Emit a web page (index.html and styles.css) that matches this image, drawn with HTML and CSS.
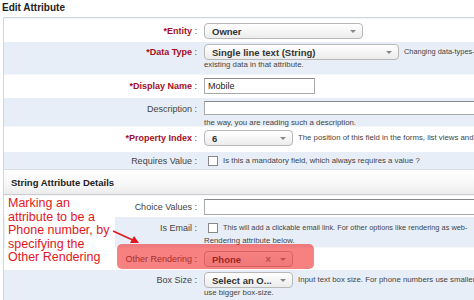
FILE: index.html
```html
<!DOCTYPE html>
<html>
<head>
    <meta charset="utf-8">
    <title>Edit Attribute</title>
    <link rel="stylesheet" href="styles.css">
</head>
<body>
<div class="page">
    <h2 class="title">Edit Attribute</h2>
    <div class="form">
        <div class="row r-entity">
            <div class="label"><span class="req">*Entity</span> :</div>
            <div class="value">
                <span class="select w-entity">Owner<i class="caret"></i></span>
            </div>
        </div>
        <div class="row alt r-type">
            <div class="label"><span class="req">*Data Type</span> :</div>
            <div class="value">
                <span class="select w-type">Single line text (String)<i class="caret"></i></span><span class="help edge">Changing data-types-</span>
                <div class="help line2">existing data in that attribute.</div>
            </div>
        </div>
        <div class="row r-name">
            <div class="label"><span class="req">*Display Name</span> :</div>
            <div class="value">
                <span class="input w-name">Mobile</span>
            </div>
        </div>
        <div class="row alt r-desc">
            <div class="label">Description :</div>
            <div class="value">
                <span class="input w-full"></span>
                <div class="help line2">the way, you are reading such a description.</div>
            </div>
        </div>
        <div class="row r-index">
            <div class="label"><span class="req">*Property Index</span> :</div>
            <div class="value">
                <span class="select w-small">6<i class="caret"></i></span><span class="help">The position of this field in the forms, list views and</span>
            </div>
        </div>
        <div class="row alt r-check">
            <div class="label">Requires Value :</div>
            <div class="value">
                <span class="check"></span><span class="help">Is this a mandatory field, which always requires a value ?</span>
            </div>
        </div>
        <div class="section">String Attribute Details</div>
        <div class="row r-choice">
            <div class="label">Choice Values :</div>
            <div class="value">
                <span class="input w-full"></span>
            </div>
        </div>
        <div class="row alt r-email">
            <div class="label">Is Email :</div>
            <div class="value">
                <span class="check"></span><span class="help edge">This will add a clickable email link. For other options like rendering as web-</span>
                <div class="help line2">Rendering attribute below.</div>
            </div>
        </div>
        <div class="row r-render">
            <div class="label">Other Rendering :</div>
            <div class="value">
                <span class="select w-small phone">Phone<b class="clear">×</b><i class="caret"></i></span>
            </div>
        </div>
        <div class="row alt r-box">
            <div class="label">Box Size :</div>
            <div class="value">
                <span class="select w-small">Select an O...<i class="caret"></i></span><span class="help">Input text box size. For phone numbers use smaller</span>
                <div class="help line2">use bigger box-size.</div>
            </div>
        </div>
    </div>

    <div class="highlight"></div>
    <div class="note">Marking an<br>attribute to be a<br>Phone number, by<br>specifying the<br>Other Rendering</div>
    <svg class="arrow" width="40" height="24" viewBox="0 0 40 24">
        <line x1="2" y1="4" x2="26" y2="15" stroke="#e3161c" stroke-width="1.6"/>
        <path d="M28 16 L19 16 L23 9 Z" fill="#e3161c"/>
    </svg>
</div>
</body>
</html>
```

FILE: styles.css
```css
html,body{
    margin: 0;
    padding: 0;
    background: #fff;
}
body{
    width: 474px;
    height: 300px;
    overflow: hidden;
    font-family: "Liberation Sans", Arial, sans-serif;
    color: #333;
}
.page{
    position: relative;
    width: 600px;
}
.title{
    margin: 0;
    padding: 2px 0 0 2px;
    height: 15px;
    font-size: 10px;
    line-height: 12px;
    font-weight: bold;
    color: #222;
}
.form{
    margin-left: 3px;
    border: 1px solid #ccd6e2;
    border-right: none;
}
.row{
    display: grid;
    grid-template-columns: 196px 1fr;
    box-sizing: border-box;
    border-top: 1px solid #f4f6fa;
}
.row.alt{
    background: #e8eef7;
    border-top: 1px solid #fff;
}
.label{
    padding-right: 3px;
    text-align: right;
    font-size: 9px;
    line-height: 16px;
    color: #444;
    white-space: nowrap;
}
.req{
    color: #a30d1f;
    font-weight: bold;
}
.value{
    padding-left: 4px;
    white-space: nowrap;
    font-size: 0;
}
.help{
    font-size: 7.8px;
    line-height: 16px;
    color: #444;
    vertical-align: top;
    margin-left: 5px;
}
.help.edge{
    font-size: 7.4px;
}
.help.line2{
    margin-left: 0;
    line-height: 10px;
}
.select{
    display: inline-flex;
    align-items: center;
    box-sizing: border-box;
    height: 16px;
    padding: 0 6px 0 7px;
    border: 1px solid #b8b8b8;
    border-radius: 4px;
    background: linear-gradient(#ffffff, #ececec);
    font-size: 9.5px;
    font-weight: bold;
    color: #333;
    vertical-align: top;
}
.caret{
    margin-left: auto;
    width: 0;
    height: 0;
    border-left: 3px solid transparent;
    border-right: 3px solid transparent;
    border-top: 3px solid #888;
}
.clear{
    margin-left: auto;
    margin-right: 9px;
    font-size: 10px;
    color: #888;
}
.clear + .caret{
    margin-left: 0;
}
.input{
    display: inline-block;
    box-sizing: border-box;
    height: 16px;
    padding: 0 3px;
    border: 1px solid #aaa;
    border-top-color: #888;
    background: #fff;
    font-size: 9px;
    line-height: 14px;
    color: #222;
    vertical-align: top;
}
.check{
    display: inline-block;
    box-sizing: border-box;
    width: 10px;
    height: 10px;
    margin: 3px 0 0 4px;
    border: 1px solid #888;
    background: #fff;
    vertical-align: top;
}
.w-entity{ width: 159px; }
.w-type{ width: 195px; }
.w-name{ width: 111px; }
.w-small{ width: 89px; }
.w-full{ width: 400px; }

.r-entity{ height: 23px; padding-top: 4px; }
.r-type{ height: 33px; padding-top: 2px; }
.r-name{ height: 23px; padding-top: 3px; }
.r-desc{ height: 29px; padding-top: 3px; }
.r-desc .input{ height: 14px; }
.r-desc .line2{ margin-top: 3px; }
.r-index{ height: 25px; padding-top: 3px; }
.r-check{ height: 18px; padding-top: 1px; }
.r-choice{ height: 21px; padding-top: 3px; }
.r-email{ height: 31px; padding-top: 3px; }
.r-render{ height: 22px; padding-top: 3px; }
.r-box{ height: 32px; padding-top: 2px; }

.section{
    height: 26px;
    box-sizing: border-box;
    padding-left: 7px;
    border-top: 1px solid #dcdfe4;
    border-bottom: 1px solid #c9ccd1;
    background: linear-gradient(#ffffff, #f7f7f7 60%, #ececec);
    font-size: 9.5px;
    line-height: 25px;
    font-weight: bold;
    color: #222;
}
.highlight{
    position: absolute;
    left: 117px;
    top: 244px;
    width: 197px;
    height: 25px;
    border-radius: 5px;
    background: rgba(240, 30, 30, 0.56);
}
.note{
    position: absolute;
    left: 5px;
    top: 197px;
    width: 107px;
    height: 66px;
    padding-left: 3px;
    background: #fff;
    font-size: 12.5px;
    line-height: 13.5px;
    color: #e3161c;
    white-space: nowrap;
}
.arrow{
    position: absolute;
    left: 111px;
    top: 227px;
}
```
